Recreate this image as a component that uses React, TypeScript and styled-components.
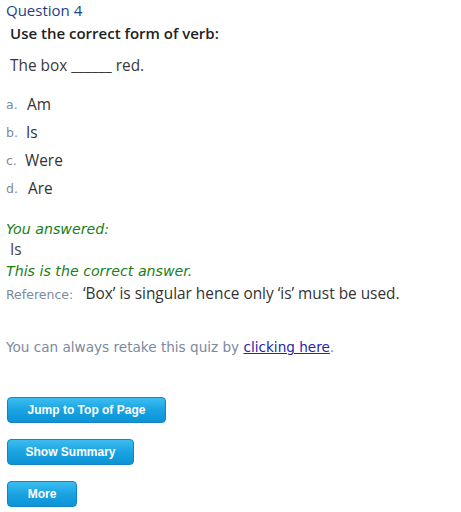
import styled, { createGlobalStyle } from "styled-components"

const GlobalStyle = createGlobalStyle`
  html, body {
    margin: 0;
    padding: 0;
    background: #ffffff;
  }
`

const Style = {
  Page: styled.div`
    width: 461px;
    height: 512px;
    padding: 0 6px;
    box-sizing: border-box;
    font-family: "Open Sans", "Liberation Sans", sans-serif;
    color: #333333;
    overflow: hidden;
  `,
  QuestionTitle: styled.div`
    height: 20px;
    line-height: 20px;
    font-size: 15px;
    color: #1d3f80;
  `,
  Prompt: styled.div`
    margin-top: 2px;
    padding-left: 4px;
    line-height: 22px;
    font-size: 15px;
    font-weight: 600;
    color: #222222;
  `,
  Sentence: styled.div`
    margin-top: 11px;
    padding-left: 4px;
    line-height: 22px;
    font-size: 15.4px;
    color: #3a3a3a;
  `,
  OptionList: styled.div`
    margin-top: 13px;
    display: flex;
    flex-direction: column;
  `,
  Option: styled.div`
    height: 28px;
    display: flex;
    align-items: center;
  `,
  OptionLetter: styled.span<{ $width: number }>`
    width: ${(p) => p.$width}px;
    font-family: "DejaVu Sans", Verdana, sans-serif;
    font-size: 12.5px;
    color: #7a8aa0;
  `,
  OptionText: styled.span`
    font-size: 15.4px;
    color: #333333;
  `,
  Feedback: styled.div<{ $gap?: number }>`
    margin-top: ${(p) => p.$gap ?? 0}px;
    line-height: 22px;
    font-family: "DejaVu Sans", Verdana, sans-serif;
    font-style: italic;
    font-size: 14.2px;
    color: #17801a;
  `,
  Answer: styled.div`
    padding-left: 4px;
    line-height: 20px;
    font-size: 15.4px;
    color: #444444;
  `,
  ReferenceRow: styled.div`
    margin-top: 1px;
    line-height: 22px;
    display: flex;
    align-items: baseline;
  `,
  ReferenceLabel: styled.span`
    width: 77px;
    font-family: "DejaVu Sans", Verdana, sans-serif;
    font-size: 12.5px;
    color: #7a8aa0;
  `,
  ReferenceText: styled.span`
    font-size: 15.4px;
    color: #333333;
  `,
  Retake: styled.div`
    margin-top: 30px;
    line-height: 22px;
    font-family: "DejaVu Sans", Verdana, sans-serif;
    font-size: 13.6px;
    color: #7a8aa0;
  `,
  Link: styled.a`
    color: #2626a8;
    text-decoration: underline;
  `,
  ButtonColumn: styled.div`
    margin-top: 39px;
    display: flex;
    flex-direction: column;
    align-items: flex-start;
    gap: 16px;
  `,
  Button: styled.button<{ $width: number }>`
    width: ${(p) => p.$width}px;
    height: 26px;
    margin-left: 1px;
    padding: 0;
    border: 1px solid #1584c4;
    border-radius: 4px;
    background: linear-gradient(#3bbdf0, #1aa3e2 50%, #0b93d6);
    color: #ffffff;
    font-family: "Liberation Sans", Arial, sans-serif;
    font-weight: bold;
    font-size: 12px;
    cursor: pointer;
  `,
}

const options = [
  { letter: "a.", text: "Am", width: 21 },
  { letter: "b.", text: "Is", width: 20 },
  { letter: "c.", text: "Were", width: 19 },
  { letter: "d.", text: "Are", width: 22 },
]

export default function App() {
  return (
    <>
      <GlobalStyle />
      <Style.Page>
        <Style.QuestionTitle>Question 4</Style.QuestionTitle>
        <Style.Prompt>Use the correct form of verb:</Style.Prompt>
        <Style.Sentence>The box ______ red.</Style.Sentence>
        <Style.OptionList>
          {options.map((o) => (
            <Style.Option key={o.letter}>
              <Style.OptionLetter $width={o.width}>{o.letter}</Style.OptionLetter>
              <Style.OptionText>{o.text}</Style.OptionText>
            </Style.Option>
          ))}
        </Style.OptionList>
        <Style.Feedback $gap={16}>You answered:</Style.Feedback>
        <Style.Answer>Is</Style.Answer>
        <Style.Feedback>This is the correct answer.</Style.Feedback>
        <Style.ReferenceRow>
          <Style.ReferenceLabel>Reference:</Style.ReferenceLabel>
          <Style.ReferenceText>
            ‘Box’ is singular hence only ‘is’ must be used.
          </Style.ReferenceText>
        </Style.ReferenceRow>
        <Style.Retake>
          You can always retake this quiz by{" "}
          <Style.Link href="#">clicking here</Style.Link>.
        </Style.Retake>
        <Style.ButtonColumn>
          <Style.Button $width={159}>Jump to Top of Page</Style.Button>
          <Style.Button $width={127}>Show Summary</Style.Button>
          <Style.Button $width={70}>More</Style.Button>
        </Style.ButtonColumn>
      </Style.Page>
    </>
  )
}
